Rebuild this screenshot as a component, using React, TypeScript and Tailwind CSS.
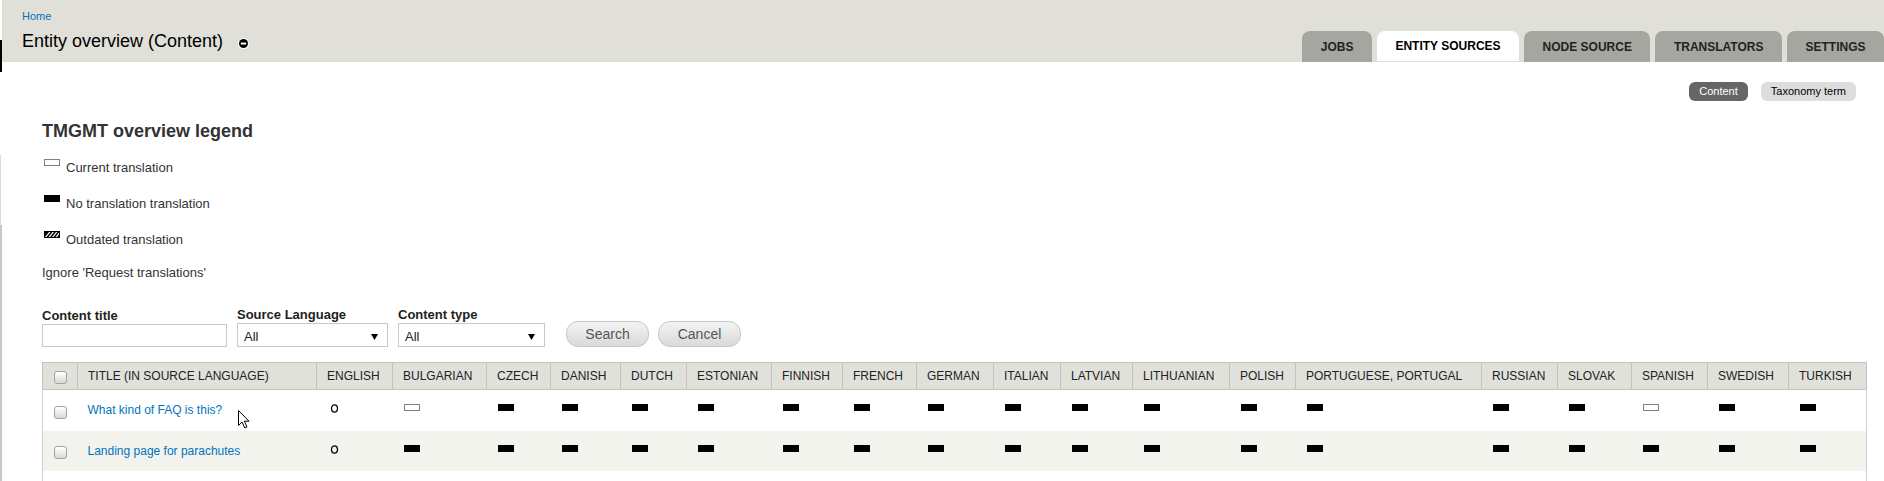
import React from 'react';

type Status = 'src' | 'current' | 'none';

const languages = [
  { name: 'ENGLISH', w: 'w-[76px]' },
  { name: 'BULGARIAN', w: 'w-[94px]' },
  { name: 'CZECH', w: 'w-[64px]' },
  { name: 'DANISH', w: 'w-[70px]' },
  { name: 'DUTCH', w: 'w-[66px]' },
  { name: 'ESTONIAN', w: 'w-[85px]' },
  { name: 'FINNISH', w: 'w-[71px]' },
  { name: 'FRENCH', w: 'w-[74px]' },
  { name: 'GERMAN', w: 'w-[77px]' },
  { name: 'ITALIAN', w: 'w-[67px]' },
  { name: 'LATVIAN', w: 'w-[72px]' },
  { name: 'LITHUANIAN', w: 'w-[97px]' },
  { name: 'POLISH', w: 'w-[66px]' },
  { name: 'PORTUGUESE, PORTUGAL', w: 'w-[186px]' },
  { name: 'RUSSIAN', w: 'w-[76px]' },
  { name: 'SLOVAK', w: 'w-[74px]' },
  { name: 'SPANISH', w: 'w-[76px]' },
  { name: 'SWEDISH', w: 'w-[81px]' },
  { name: 'TURKISH', w: 'w-[78px]' },
];

const rows: { title: string; status: Status[]; bg: string; h: string }[] = [
  {
    title: 'What kind of FAQ is this?',
    bg: 'bg-white',
    h: 'h-[41px]',
    status: languages.map((l, i) =>
      i === 0 ? 'src' : l.name === 'BULGARIAN' || l.name === 'SPANISH' ? 'current' : 'none'
    ),
  },
  {
    title: 'Landing page for parachutes',
    bg: 'bg-[#f3f3ee]',
    h: 'h-[40px]',
    status: languages.map((_, i) => (i === 0 ? 'src' : 'none')),
  },
];

const tabs = ['JOBS', 'ENTITY SOURCES', 'NODE SOURCE', 'TRANSLATORS', 'SETTINGS'];

function Checkbox() {
  return (
    <span className="block w-[13px] h-[13px] rounded-[3px] border border-[#a3a3a3] bg-gradient-to-b from-[#ffffff] to-[#d9d9d9]" />
  );
}

function Marker({ status }: { status: Status }) {
  if (status === 'src') {
    return (
      <svg width="16" height="11" viewBox="0 0 16 11" className="block mb-[3px]">
        <ellipse cx="7.5" cy="5.5" rx="3" ry="3.6" fill="none" stroke="#000" strokeWidth="1.3" />
      </svg>
    );
  }
  if (status === 'current') {
    return <span className="block w-[16px] h-[7px] border border-[#808080] bg-white mb-[5px] ml-[1px]" />;
  }
  return <span className="block w-[16px] h-[7px] bg-black mb-[5px] ml-[1px]" />;
}

function Select() {
  return (
    <div className="flex items-center justify-between h-[24px] px-[6px] border border-[#c8c8c8] bg-white text-[13px] text-[#222] leading-none">
      <span className="pt-[3px]">All</span>
      <svg width="7" height="7" viewBox="0 0 7 7" className="mr-[3px] mt-[2px]">
        <path d="M0 1 L7 1 L3.5 7 Z" fill="#000" />
      </svg>
    </div>
  );
}

export default function App() {
  return (
    <div className="relative min-h-[481px] bg-white font-['Liberation_Sans',Arial,sans-serif] text-[#333] overflow-hidden">
      {/* window edge artifacts */}
      <div className="absolute left-0 top-[40px] w-[2px] h-[32px] bg-black" />
      <div className="absolute left-0 top-[155px] w-[1px] h-[70px] bg-[#dcdcdc]" />
      <div className="absolute left-0 top-[225px] w-[2px] h-[256px] bg-[#c8c8c8]" />

      {/* header */}
      <div className="ml-[2px] h-[62px] bg-[#e0dfd8] flex justify-between items-end">
        <div className="pl-[20px] self-start pt-[10px]">
          <div className="text-[11px] leading-[13px] text-[#0074bd]">Home</div>
          <div className="mt-[7px] flex items-center">
            <h1 className="text-[18px] leading-[22px] text-black font-normal">Entity overview (Content)</h1>
            <svg width="11" height="11" viewBox="0 0 11 11" className="ml-[15px] mt-[4px]">
              <circle cx="5.5" cy="5.5" r="5.5" fill="#fff" />
              <circle cx="5.5" cy="5.5" r="4.5" fill="#000" />
              <rect x="2.8" y="4.6" width="5.4" height="1.9" fill="#fff" />
            </svg>
          </div>
        </div>
        <div className="flex gap-[5px]">
          {tabs.map((t) => (
            <div
              key={t}
              className={
                t === 'ENTITY SOURCES'
                  ? 'h-[30px] px-[18.5px] rounded-t-[8px] bg-white text-[12px] font-bold text-black flex items-center'
                  : 'h-[31px] px-[18.5px] rounded-t-[8px] bg-[#a6a6a0] text-[12px] font-bold text-[#222] flex items-center'
              }
            >
              {t}
            </div>
          ))}
        </div>
      </div>

      <div className="pl-[42px]">
        {/* entity type switch */}
        <div className="flex justify-end gap-[13px] pr-[28px] pt-[20px]">
          <span className="h-[19px] px-[10px] rounded-[6px] bg-[#666] text-white text-[11px] flex items-center">Content</span>
          <span className="h-[19px] px-[10px] rounded-[6px] bg-[#ddd] text-black text-[11px] flex items-center">Taxonomy term</span>
        </div>

        {/* legend */}
        <h2 className="mt-[19px] text-[18px] leading-[22px] font-bold text-[#333]">TMGMT overview legend</h2>
        <div className="mt-[18px] flex flex-col gap-[20px] text-[13px] leading-[16px]">
          <div className="flex items-start gap-[6px]">
            <span className="ml-[2px] -mt-[1px] w-[16px] h-[7px] border border-[#808080] bg-white" />
            <span>Current translation</span>
          </div>
          <div className="flex items-start gap-[6px]">
            <span className="ml-[2px] -mt-[1px] w-[16px] h-[7px] bg-black" />
            <span>No translation translation</span>
          </div>
          <div className="flex items-start gap-[6px]">
            <svg width="16" height="7" viewBox="0 0 16 7" className="ml-[2px] -mt-[1px]">
              <rect x="0" y="0" width="16" height="7" fill="#000" />
              <path
                d="M1 6 L5 1 L6.5 1 L2.5 6 Z M4.5 6 L8.5 1 L10 1 L6 6 Z M8 6 L12 1 L13.5 1 L9.5 6 Z M11.5 6 L15 1.6 L15 3.4 L13 6 Z"
                fill="#fff"
              />
            </svg>
            <span>Outdated translation</span>
          </div>
        </div>
        <div className="mt-[17px] text-[13px] leading-[16px]">Ignore 'Request translations'</div>

        {/* filters */}
        <div className="mt-[26px] flex items-end">
          <div className="w-[185px]">
            <div className="text-[13px] leading-[16px] font-bold text-[#222]">Content title</div>
            <input className="block w-[185px] h-[23px] border border-[#c8c8c8] bg-white px-[4px] text-[13px] outline-none" />
          </div>
          <div className="w-[151px] ml-[10px]">
            <div className="text-[13px] leading-[16px] font-bold text-[#222]">Source Language</div>
            <Select />
          </div>
          <div className="w-[147px] ml-[10px]">
            <div className="text-[13px] leading-[16px] font-bold text-[#222]">Content type</div>
            <Select />
          </div>
          <button className="ml-[21px] w-[83px] h-[26px] rounded-[12px] border border-[#c6c6c6] bg-gradient-to-b from-[#f3f3f3] to-[#dadada] text-[14px] text-[#555]">
            Search
          </button>
          <button className="ml-[9px] w-[83px] h-[26px] rounded-[12px] border border-[#c6c6c6] bg-gradient-to-b from-[#f3f3f3] to-[#dadada] text-[14px] text-[#555]">
            Cancel
          </button>
        </div>

        {/* overview table */}
        <table className="mt-[15px] table-fixed border-collapse w-[1824px] border border-[#cfcfcf] text-[12px]">
          <colgroup>
            <col className="w-[35px]" />
            <col className="w-[239px]" />
            {languages.map((l) => (
              <col key={l.name} className={l.w} />
            ))}
          </colgroup>
          <thead>
            <tr className="h-[27px] bg-[#e1e1dc]">
              <th className="border border-[#c4c4bf] p-0">
                <div className="flex justify-center pt-[2px]">
                  <Checkbox />
                </div>
              </th>
              <th className="border border-[#c4c4bf] px-[10px] text-left font-normal text-[#222] whitespace-nowrap">
                TITLE (IN SOURCE LANGUAGE)
              </th>
              {languages.map((l) => (
                <th
                  key={l.name}
                  className="border border-[#c4c4bf] px-[10px] text-left font-normal text-[#222] whitespace-nowrap"
                >
                  {l.name}
                </th>
              ))}
            </tr>
          </thead>
          <tbody>
            {rows.map((r) => (
              <tr key={r.title} className={`${r.bg} ${r.h}`}>
                <td className="p-0 align-middle">
                  <div className="flex justify-center mt-[4px]">
                    <Checkbox />
                  </div>
                </td>
                <td className="px-[10px] align-middle">
                  <a className="text-[#0074bd] whitespace-nowrap">{r.title}</a>
                </td>
                {r.status.map((s, i) => (
                  <td key={i} className="px-[10px] align-middle">
                    <Marker status={s} />
                  </td>
                ))}
              </tr>
            ))}
            <tr className="h-[40px] bg-white">
              <td colSpan={2 + languages.length} />
            </tr>
          </tbody>
        </table>
      </div>

      {/* mouse pointer */}
      <svg width="12" height="19" viewBox="0 0 12 19" className="absolute left-[238px] top-[410px]">
        <path d="M0.5 0.5 L0.5 15.5 L4 12 L6.8 18 L9 17 L6.3 11.2 L11 11.2 Z" fill="#fff" stroke="#000" strokeWidth="1" />
      </svg>
    </div>
  );
}
